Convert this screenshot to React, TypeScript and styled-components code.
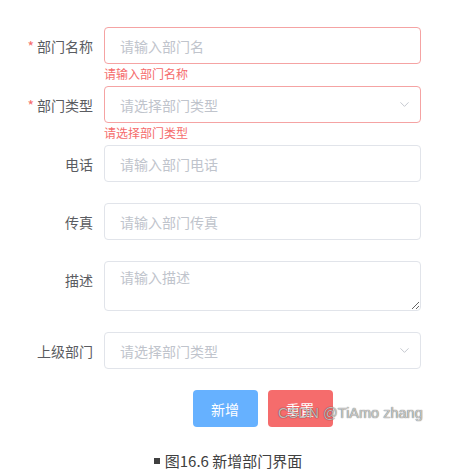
import React from "react";
import styled, { createGlobalStyle } from "styled-components";
import { ChevronDown } from "lucide-react";

const Global = createGlobalStyle`
  html, body { margin: 0; padding: 0; background: #fff; }
  body { font-family: "Noto Sans CJK SC", "Noto Sans", sans-serif; }
  * { box-sizing: border-box; }
`;

const Page = styled.div`
  position: relative;
  width: 474px;
  height: 475px;
  padding-top: 27px;
  overflow: hidden;
`;

const Form = styled.div`
  display: flex;
  flex-direction: column;
`;

const Item = styled.div<{ $gap?: number }>`
  display: grid;
  grid-template-columns: 104px 317px;
  align-items: start;
  margin-bottom: ${(p) => (p.$gap ?? 22)}px;
`;

const Label = styled.label`
  display: flex;
  align-items: center;
  justify-content: flex-end;
  padding-right: 11px;
  height: 37px;
  font-size: 14px;
  color: #5a5c61;
  white-space: nowrap;
`;

const Star = styled.span`
  color: #f56c6c;
  margin-right: 3px;
  font-size: 14px;
`;

const Control = styled.div`
  position: relative;
`;

const TextInput = styled.input<{ $error?: boolean }>`
  width: 100%;
  height: 37px;
  border: 1px solid ${(p) => (p.$error ? "#f5a3a3" : "#e1e4ea")};
  border-radius: 4px;
  padding: 0 15px;
  font-family: inherit;
  font-size: 14px;
  color: #606266;
  outline: none;
  background: #fff;
  &::placeholder { color: #c0c4cc; }
`;

const Area = styled.textarea`
  display: block;
  width: 100%;
  height: 50px;
  border: 1px solid #e1e4ea;
  border-radius: 4px;
  padding: 5px 15px;
  font-family: inherit;
  font-size: 14px;
  line-height: 1.5;
  color: #606266;
  outline: none;
  resize: vertical;
  &::placeholder { color: #c0c4cc; }
`;

const Arrow = styled.span`
  position: absolute;
  right: 9px;
  top: 0;
  height: 37px;
  display: flex;
  align-items: center;
  color: #c0c4cc;
`;

const ErrorText = styled.div`
  position: absolute;
  left: 0;
  top: 100%;
  padding-top: 4px;
  font-size: 12px;
  line-height: 1;
  color: #f56c6c;
  white-space: nowrap;
`;

const Buttons = styled.div`
  grid-column: 2;
  display: flex;
  justify-content: center;
  gap: 10px;
`;

const Button = styled.button<{ $kind: "primary" | "danger" }>`
  width: 65px;
  height: 37px;
  border: none;
  border-radius: 4px;
  background: ${(p) => (p.$kind === "primary" ? "#66b1ff" : "#f56c6c")};
  color: #fff;
  font-family: inherit;
  font-size: 14px;
  padding: 0;
`;

const Caption = styled.div`
  margin-top: 23px;
  display: flex;
  justify-content: center;
  align-items: center;
  gap: 5px;
  padding-right: 18px;
  font-size: 15px;
  color: #404040;
`;

const Square = styled.span`
  width: 6px;
  height: 6px;
  background: #404040;
  display: inline-block;
`;

const Watermark = styled.div`
  position: absolute;
  left: 278px;
  top: 405px;
  font-family: "Liberation Sans", Arial, sans-serif;
  font-size: 14.5px;
  color: rgba(225, 225, 225, 0.8);
  text-shadow: 0 0 1px rgba(0, 0, 0, 0.6), 0 0 1px rgba(0, 0, 0, 0.3);
  white-space: nowrap;
`;

export default function App() {
  return (
    <>
      <Global />
      <Page>
        <Form>
          <Item>
            <Label><Star>*</Star>部门名称</Label>
            <Control>
              <TextInput $error placeholder="请输入部门名" />
              <ErrorText>请输入部门名称</ErrorText>
            </Control>
          </Item>
          <Item>
            <Label><Star>*</Star>部门类型</Label>
            <Control>
              <TextInput $error readOnly placeholder="请选择部门类型" />
              <Arrow><ChevronDown size={15} strokeWidth={1.5} /></Arrow>
              <ErrorText>请选择部门类型</ErrorText>
            </Control>
          </Item>
          <Item $gap={21}>
            <Label>电话</Label>
            <Control>
              <TextInput placeholder="请输入部门电话" />
            </Control>
          </Item>
          <Item $gap={21}>
            <Label>传真</Label>
            <Control>
              <TextInput placeholder="请输入部门传真" />
            </Control>
          </Item>
          <Item $gap={21}>
            <Label>描述</Label>
            <Control>
              <Area placeholder="请输入描述" />
            </Control>
          </Item>
          <Item $gap={21}>
            <Label>上级部门</Label>
            <Control>
              <TextInput readOnly placeholder="请选择部门类型" />
              <Arrow><ChevronDown size={15} strokeWidth={1.5} /></Arrow>
            </Control>
          </Item>
          <Item $gap={0}>
            <Buttons>
              <Button $kind="primary">新增</Button>
              <Button $kind="danger">重置</Button>
            </Buttons>
          </Item>
        </Form>
        <Caption><Square />图16.6 新增部门界面</Caption>
        <Watermark>CSDN @TiAmo zhang</Watermark>
      </Page>
    </>
  );
}
